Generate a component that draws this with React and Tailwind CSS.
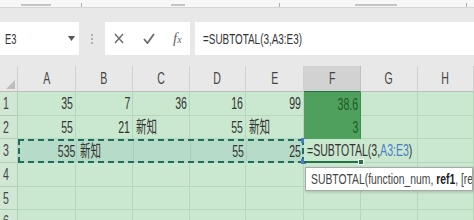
import React from "react";

const ROW = "grid grid-cols-[18px_58px_57px_57px_56px_58px_57px_57px_56px]";

function T({ children, o = "r", className = "" }) {
  const origin = o === "l" ? "origin-left" : o === "c" ? "origin-center" : "origin-right";
  return (
    <span className={`inline-block whitespace-nowrap scale-x-[0.62] ${origin} ${className}`}>{children}</span>
  );
}

function Cell({ children, left, h = "h-[24px]" }) {
  return (
    <div
      className={`${h} flex items-center border-r border-b border-[#b7d7bc] bg-[#cae8cf] text-[17px] leading-none text-[#333] ${
        left ? "justify-start pl-[3px]" : "justify-end pr-[2px]"
      }`}
    >
      {children != null && <T o={left ? "l" : "r"}>{children}</T>}
    </div>
  );
}

function DarkCell({ children, h = "h-[24px]" }) {
  return (
    <div className={`${h} flex items-center justify-end pr-[2px] border-r border-[#3f8a4c] bg-[#4fa05d] text-[17px] leading-none text-[#1a5a26]`}>
      <T o="r">{children}</T>
    </div>
  );
}

function RH({ n, h = "h-[24px]" }) {
  return (
    <div className={`${h} flex items-center justify-start pl-[3px] border-r border-b border-[#b0cfb5] bg-[#cfe7d3] text-[17px] leading-none text-[#444]`}>
      <T o="l">{n}</T>
    </div>
  );
}

function ColH({ l, active }) {
  return (
    <div
      className={`h-[26px] flex items-center justify-center border-r border-b text-[17px] leading-none text-[#444] ${
        active ? "bg-[#d2d2d2] border-r-[#c0c0c0] border-b-[#217346]" : "bg-[#e8e8e8] border-r-[#d0d0d0] border-b-[#bcbcbc]"
      }`}
    >
      <T o="c">{l}</T>
    </div>
  );
}

function EmptyRow({ n, h }) {
  return (
    <div className={ROW}>
      <RH n={n} h={h} />
      <Cell h={h} />
      <Cell h={h} />
      <Cell h={h} />
      <Cell h={h} />
      <Cell h={h} />
      <Cell h={h} />
      <Cell h={h} />
      <Cell h={h} />
    </div>
  );
}

function Frag({ w, ml }) {
  return <span className={`${ml} ${w} h-[2px] mb-[1px] bg-[#c4c4c4]`} />;
}

export default function App() {
  return (
    <div className="w-[474px] h-[220px] overflow-hidden bg-[#cae8cf] font-['Liberation_Sans','Noto_Sans_CJK_SC',sans-serif]">
      {/* ribbon remnant */}
      <div className="h-[8px] bg-[#f7f7f7] border-b border-[#d6d6d6] flex items-end">
        <Frag ml="ml-[21px]" w="w-[30px]" />
        <span className="ml-[30px] h-[4px] w-px bg-[#b0b0b0]" />
        <Frag ml="ml-[89px]" w="w-[14px]" />
        <span className="ml-[94px] h-[4px] w-px bg-[#b0b0b0]" />
        <Frag ml="ml-[75px]" w="w-[42px]" />
        <span className="ml-[69px] h-[4px] w-px bg-[#b0b0b0]" />
      </div>

      {/* formula bar */}
      <div className="h-[58px] bg-[#e8e8e8] flex items-start pt-[14px]">
        <div className="w-[79px] h-[33px] bg-white flex items-center justify-between pl-[5px] pr-[4px] text-[15px] leading-none text-[#333]">
          <T o="l">E3</T>
          <svg width="7" height="5" viewBox="0 0 7 5">
            <path d="M0 0 L7 0 L3.5 5 Z" fill="#555" />
          </svg>
        </div>
        <div className="w-[26px] h-[33px] flex flex-col items-center justify-center gap-[2px]">
          <span className="w-[2px] h-[2px] bg-[#b0b0b0]" />
          <span className="w-[2px] h-[2px] bg-[#b0b0b0]" />
          <span className="w-[2px] h-[2px] bg-[#b0b0b0]" />
        </div>
        <div className="w-[85px] h-[33px] bg-white flex items-center">
          <svg className="ml-[9px]" width="10" height="11" viewBox="0 0 10 11">
            <path d="M1 1 L9 10 M9 1 L1 10" stroke="#6a6a6a" strokeWidth="1.4" fill="none" />
          </svg>
          <svg className="ml-[19px]" width="12" height="11" viewBox="0 0 12 11">
            <path d="M1 6 L4.5 10 L11 1" stroke="#6a6a6a" strokeWidth="1.8" fill="none" />
          </svg>
          <span className="ml-[18px] italic font-['Liberation_Serif',serif] text-[15px] leading-none text-[#666]">
            f<span className="text-[10px]">x</span>
          </span>
        </div>
        <div className="ml-[5px] flex-1 h-[33px] bg-white flex items-center pl-[8px] text-[15px] leading-none text-[#333]">
          <span className="inline-block whitespace-nowrap scale-x-[0.66] origin-left">=SUBTOTAL(3,A3:E3)</span>
        </div>
      </div>

      {/* header row */}
      <div className={ROW}>
        <div className="h-[26px] bg-[#e8e8e8] border-r border-b border-r-[#d0d0d0] border-b-[#bcbcbc] flex items-end justify-end pr-[2px] pb-[2px]">
          <svg width="9" height="9" viewBox="0 0 9 9">
            <path d="M9 0 L9 9 L0 9 Z" fill="#bdbdbd" />
          </svg>
        </div>
        <ColH l="A" />
        <ColH l="B" />
        <ColH l="C" />
        <ColH l="D" />
        <ColH l="E" />
        <ColH l="F" active />
        <ColH l="G" />
        <ColH l="H" />
      </div>

      {/* row 1 */}
      <div className={ROW}>
        <RH n="1" />
        <Cell>35</Cell>
        <Cell>7</Cell>
        <Cell>36</Cell>
        <Cell>16</Cell>
        <Cell>99</Cell>
        <DarkCell>38.6</DarkCell>
        <Cell />
        <Cell />
      </div>

      {/* row 2 */}
      <div className={ROW}>
        <RH n="2" h="h-[23px]" />
        <Cell h="h-[23px]">55</Cell>
        <Cell h="h-[23px]">21</Cell>
        <Cell h="h-[23px]" left>新知</Cell>
        <Cell h="h-[23px]">55</Cell>
        <Cell h="h-[23px]" left>新知</Cell>
        <DarkCell h="h-[23px]">3</DarkCell>
        <Cell h="h-[23px]" />
        <Cell h="h-[23px]" />
      </div>

      {/* row 3 */}
      <div className={ROW}>
        <RH n="3" />
        <div className="col-span-5 relative h-[24px] border-2 border-dashed border-[#1f6d5e] bg-[#b7dbc9] grid grid-cols-[57px_57px_57px_56px_56px] text-[17px] leading-none text-[#333]">
          <div className="flex items-center justify-end pr-[1px] border-r border-[#a9cdbb]"><T>535</T></div>
          <div className="flex items-center justify-start pl-[3px] border-r border-[#a9cdbb]"><T o="l">新知</T></div>
          <div className="border-r border-[#a9cdbb]" />
          <div className="flex items-center justify-end pr-[2px] border-r border-[#a9cdbb]"><T>55</T></div>
          <div className="flex items-center justify-end pr-[2px]"><T>25</T></div>
          <span className="absolute -right-[4px] -top-[3px] w-[5px] h-[5px] bg-[#4a7cc0]" />
          <span className="absolute -right-[4px] -bottom-[3px] w-[5px] h-[5px] bg-[#4a7cc0]" />
        </div>
        <div className="relative z-10 h-[24px] flex items-center justify-start pl-[3px] border-b-2 border-[#217346] bg-[#cae8cf] text-[17px] leading-none text-[#333]">
          <T o="l">
            =SUBTOTAL(3,<span className="text-[#4a7cc8]">A3:E3</span>)
          </T>
          <span className="absolute -right-[3px] -bottom-[4px] w-[6px] h-[6px] bg-[#217346] border border-white" />
          <div className="absolute left-[1px] top-[28px] w-[168px] h-[24px] overflow-hidden bg-white border border-[#a8a8a8] shadow-[1px_1px_3px_rgba(0,0,0,0.2)] flex items-center pl-[5px] text-[14px] leading-none text-[#444]">
            <span className="inline-block whitespace-nowrap scale-x-[0.74] origin-left">
              SUBTOTAL(function_num, <b className="text-[#222]">ref1</b>, [re
            </span>
          </div>
        </div>
        <Cell />
        <Cell />
      </div>

      <EmptyRow n="4" h="h-[24px]" />
      <EmptyRow n="5" h="h-[23px]" />
      <EmptyRow n="6" h="h-[24px]" />
    </div>
  );
}
